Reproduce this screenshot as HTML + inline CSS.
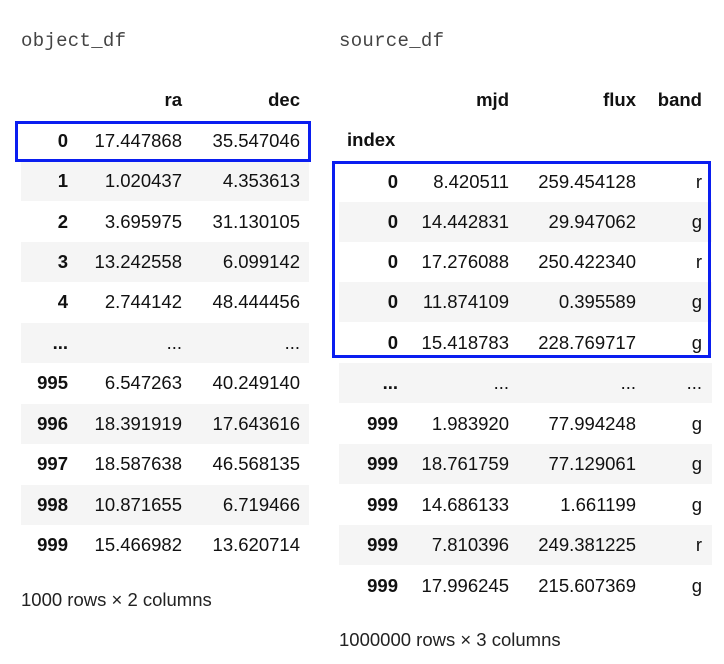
<!DOCTYPE html>
<html><head><meta charset="utf-8"><style>
body{margin:0;width:724px;height:664px;background:#fff;position:relative;overflow:hidden;font-family:"Liberation Sans",Arial,sans-serif;color:#111}
.t{position:absolute;font-family:"Liberation Mono",monospace;font-size:19px;letter-spacing:0.3px;color:#444;top:30px}
.r{position:absolute;height:40px;line-height:40px;font-size:18.5px}
.r.s{background:#f5f5f5}
.c{position:absolute;top:0;text-align:right;white-space:nowrap}
.b{font-weight:bold}
.L{left:21px;width:288px}
.R{left:339px;width:373px}
.L .c0{left:0;width:47px}.L .c1{left:47px;width:114px}.L .c2{left:161px;width:118px}
.R .c0{left:0;width:59px}.R .c1{left:59px;width:111px}.R .c2{left:170px;width:127px}.R .c3{left:297px;width:66px}
.box{position:absolute;border:3px solid #0a1ef0;box-sizing:border-box}
.f{position:absolute;font-size:18.5px;color:#222}
</style></head><body>
<div class="t" style="left:21px">object_df</div>
<div class="t" style="left:339px">source_df</div>

<div class="r L b" style="top:80px"><span class="c c1">ra</span><span class="c c2">dec</span></div>
<div class="r L" style="top:121px"><span class="c c0 b">0</span><span class="c c1">17.447868</span><span class="c c2">35.547046</span></div>
<div class="r L s" style="top:161px"><span class="c c0 b">1</span><span class="c c1">1.020437</span><span class="c c2">4.353613</span></div>
<div class="r L" style="top:202px"><span class="c c0 b">2</span><span class="c c1">3.695975</span><span class="c c2">31.130105</span></div>
<div class="r L s" style="top:242px"><span class="c c0 b">3</span><span class="c c1">13.242558</span><span class="c c2">6.099142</span></div>
<div class="r L" style="top:282px"><span class="c c0 b">4</span><span class="c c1">2.744142</span><span class="c c2">48.444456</span></div>
<div class="r L s" style="top:323px"><span class="c c0 b">...</span><span class="c c1">...</span><span class="c c2">...</span></div>
<div class="r L" style="top:363px"><span class="c c0 b">995</span><span class="c c1">6.547263</span><span class="c c2">40.249140</span></div>
<div class="r L s" style="top:404px"><span class="c c0 b">996</span><span class="c c1">18.391919</span><span class="c c2">17.643616</span></div>
<div class="r L" style="top:444px"><span class="c c0 b">997</span><span class="c c1">18.587638</span><span class="c c2">46.568135</span></div>
<div class="r L s" style="top:485px"><span class="c c0 b">998</span><span class="c c1">10.871655</span><span class="c c2">6.719466</span></div>
<div class="r L" style="top:525px"><span class="c c0 b">999</span><span class="c c1">15.466982</span><span class="c c2">13.620714</span></div>
<div class="box" style="left:15px;top:121px;width:296px;height:41px"></div>
<div class="f" style="left:21px;top:589px">1000 rows × 2 columns</div>

<div class="r R b" style="top:80px"><span class="c c1">mjd</span><span class="c c2">flux</span><span class="c c3">band</span></div>
<div class="r R b" style="top:120px"><span class="c" style="left:8px;text-align:left">index</span></div>
<div class="r R" style="top:162px"><span class="c c0 b">0</span><span class="c c1">8.420511</span><span class="c c2">259.454128</span><span class="c c3">r</span></div>
<div class="r R s" style="top:202px"><span class="c c0 b">0</span><span class="c c1">14.442831</span><span class="c c2">29.947062</span><span class="c c3">g</span></div>
<div class="r R" style="top:242px"><span class="c c0 b">0</span><span class="c c1">17.276088</span><span class="c c2">250.422340</span><span class="c c3">r</span></div>
<div class="r R s" style="top:282px"><span class="c c0 b">0</span><span class="c c1">11.874109</span><span class="c c2">0.395589</span><span class="c c3">g</span></div>
<div class="r R" style="top:323px"><span class="c c0 b">0</span><span class="c c1">15.418783</span><span class="c c2">228.769717</span><span class="c c3">g</span></div>
<div class="r R s" style="top:363px"><span class="c c0 b">...</span><span class="c c1">...</span><span class="c c2">...</span><span class="c c3">...</span></div>
<div class="r R" style="top:404px"><span class="c c0 b">999</span><span class="c c1">1.983920</span><span class="c c2">77.994248</span><span class="c c3">g</span></div>
<div class="r R s" style="top:444px"><span class="c c0 b">999</span><span class="c c1">18.761759</span><span class="c c2">77.129061</span><span class="c c3">g</span></div>
<div class="r R" style="top:485px"><span class="c c0 b">999</span><span class="c c1">14.686133</span><span class="c c2">1.661199</span><span class="c c3">g</span></div>
<div class="r R s" style="top:525px"><span class="c c0 b">999</span><span class="c c1">7.810396</span><span class="c c2">249.381225</span><span class="c c3">r</span></div>
<div class="r R" style="top:566px"><span class="c c0 b">999</span><span class="c c1">17.996245</span><span class="c c2">215.607369</span><span class="c c3">g</span></div>
<div class="box" style="left:332px;top:161px;width:379px;height:197px"></div>
<div class="f" style="left:339px;top:629px">1000000 rows × 3 columns</div>
</body></html>
